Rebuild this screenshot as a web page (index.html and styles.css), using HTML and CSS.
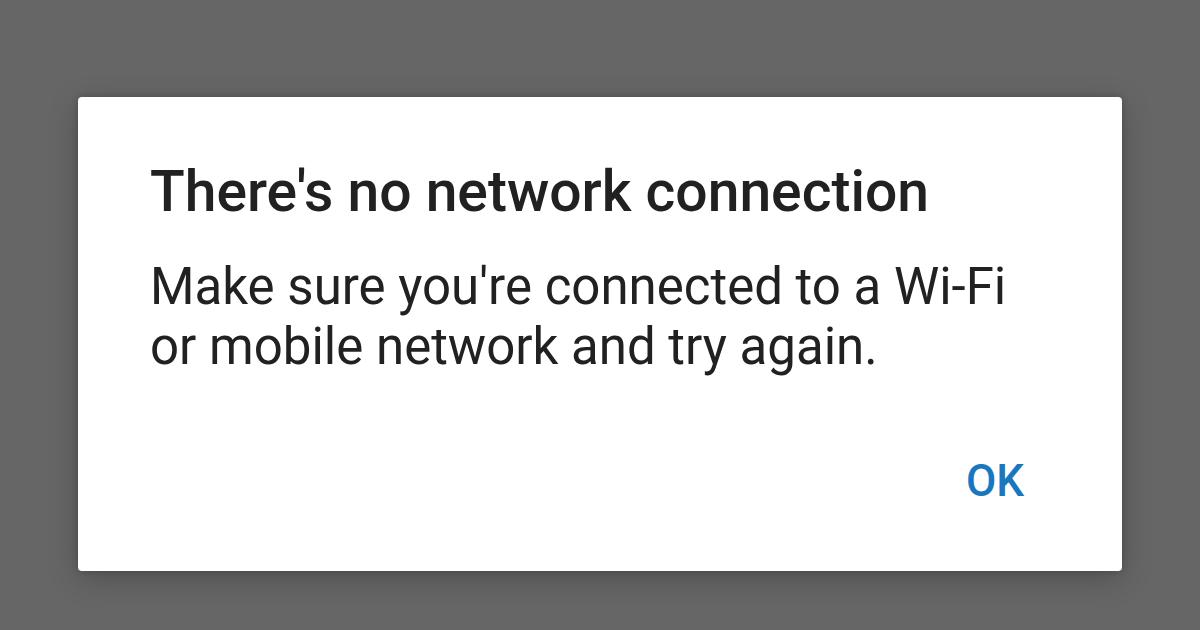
FILE: index.html
```html
<!DOCTYPE html>
<html lang="en">
<head>
    <meta charset="UTF-8">
    <title>No network</title>
    <link rel="stylesheet" href="styles.css">
</head>
<body>
    <div class="dialog">
        <h1 class="title">There's no network connection</h1>
        <p class="message">Make sure you're connected to a Wi-Fi<br>or mobile network and try again.</p>
        <div class="actions">
            <button class="ok">OK</button>
        </div>
    </div>
</body>
</html>
```

FILE: styles.css
```css
html, body {
    margin: 0;
    height: 100%;
}
body {
    background-color: #666666;
    font-family: Roboto, "Noto Sans", sans-serif;
    padding: 97px 78px 59px;
    box-sizing: border-box;
}
.dialog {
    background: #ffffff;
    border-radius: 4px;
    height: 474px;
    box-sizing: border-box;
    padding: 65px 72px 0;
    display: flex;
    flex-direction: column;
    box-shadow: 0 8px 30px rgba(0, 0, 0, 0.22), 0 0 6px rgba(0, 0, 0, 0.2);
}
.title {
    margin: 0;
    font-size: 57px;
    font-weight: 500;
    color: #212121;
    line-height: 60px;
}
.message {
    margin: 35px 0 0;
    font-size: 51px;
    color: #212121;
    line-height: 60px;
}
.actions {
    display: flex;
    justify-content: flex-end;
    margin-top: 74px;
}
.ok {
    background: none;
    border: none;
    padding: 0;
    margin-right: 26px;
    font-family: inherit;
    font-size: 44px;
    line-height: 60px;
    font-weight: 500;
    color: #1a76bd;
}
```
